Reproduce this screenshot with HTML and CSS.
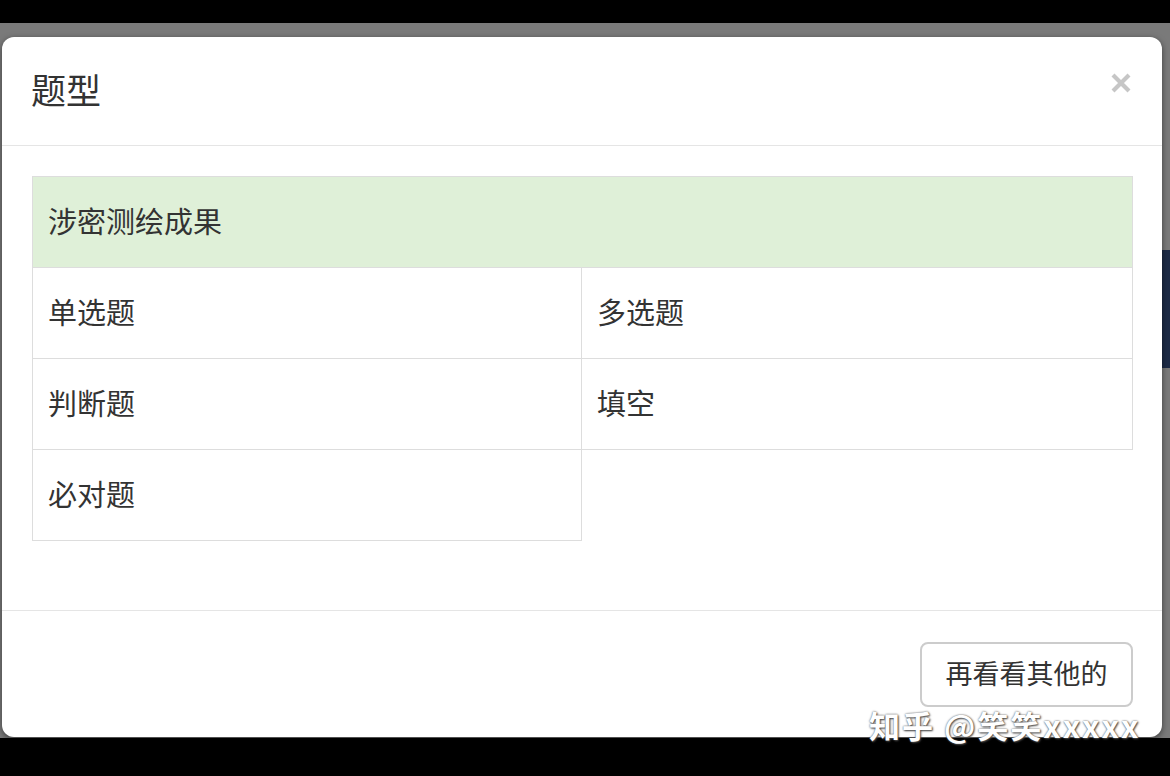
FILE: index.html
```html
<!DOCTYPE html>
<html lang="zh-CN">
<head>
    <meta charset="UTF-8">
    <meta name="viewport" content="width=device-width, initial-scale=1.0">
    <title>题型</title>
    <link rel="stylesheet" href="styles.css">
</head>
<body>
    <div class="screen">
        <div class="page-behind"></div>
        <div class="modal">
            <div class="modal-header">
                <h4 class="modal-title">题型</h4>
                <button class="close" type="button" aria-label="Close">
                    <svg width="22" height="22" viewBox="0 0 22 22">
                        <path d="M3 3 L19 19 M19 3 L3 19" stroke="#c6c6c6" stroke-width="4.2" stroke-linecap="butt"/>
                    </svg>
                </button>
            </div>
            <div class="modal-body">
                <table class="type-table">
                    <colgroup>
                        <col class="col-left">
                        <col>
                    </colgroup>
                    <tr class="success">
                        <td colspan="2">涉密测绘成果</td>
                    </tr>
                    <tr>
                        <td>单选题</td>
                        <td>多选题</td>
                    </tr>
                    <tr>
                        <td>判断题</td>
                        <td>填空</td>
                    </tr>
                    <tr>
                        <td>必对题</td>
                    </tr>
                </table>
            </div>
            <div class="modal-footer">
                <button class="btn" type="button">再看看其他的</button>
            </div>
        </div>
    </div>
    <div class="watermark">知乎 @笑笑xxxxx</div>
</body>
</html>
```

FILE: styles.css
```css
html, body {
    margin: 0;
    padding: 0;
}
body {
    background: #000;
    font-family: "Noto Sans CJK SC", "Liberation Sans", sans-serif;
    color: #333;
    width: 1170px;
    height: 776px;
    overflow: hidden;
    position: relative;
}
.screen {
    position: relative;
    margin-top: 23px;
    height: 715px;
    background: #7a7a7a;
    padding: 14px 0 0 2px;
    box-sizing: border-box;
}
.page-behind {
    position: absolute;
    right: 0;
    top: 227px;
    width: 8px;
    height: 118px;
    background: #1c2a46;
}
.modal {
    position: relative;
    width: 1160px;
    height: 700px;
    background: #fff;
    border-radius: 12px;
    box-shadow: 0 2px 6px rgba(0, 0, 0, 0.5);
    display: flex;
    flex-direction: column;
}
.modal-header {
    height: 108px;
    border-bottom: 1px solid #e5e5e5;
    display: flex;
    align-items: center;
    justify-content: space-between;
    padding: 0 30px 0 29px;
}
.modal-title {
    margin: -6px 0 0 0;
    font-size: 35px;
    font-weight: normal;
    color: #333;
    line-height: 1;
}
.close {
    background: none;
    border: none;
    padding: 0;
    margin-top: -16px;
    cursor: pointer;
    display: flex;
}
.modal-body {
    padding: 30px 29px 0 30px;
    height: 464px;
    box-sizing: border-box;
}
.type-table {
    width: 1101px;
    border-collapse: collapse;
    table-layout: fixed;
}
.col-left {
    width: 549px;
}
.type-table td {
    height: 85px;
    border: 1px solid #ddd;
    padding: 0 15px 5px 15px;
    font-size: 29px;
    vertical-align: middle;
    color: #333;
}
.type-table tr.success td {
    background: #dff0d8;
}
.modal-footer {
    flex: 1;
    border-top: 1px solid #e5e5e5;
    display: flex;
    justify-content: flex-end;
    align-items: center;
    padding: 0 29px 0 0;
}
.btn {
    width: 213px;
    height: 65px;
    background: #fff;
    border: 2px solid #ccc;
    border-radius: 8px;
    font-family: "Noto Sans CJK SC", "Liberation Sans", sans-serif;
    font-size: 27px;
    color: #333;
    cursor: pointer;
    padding-bottom: 4px;
}
.watermark {
    position: absolute;
    left: 869px;
    top: 702px;
    font-size: 31px;
    font-weight: bold;
    color: #fff;
    letter-spacing: 2px;
    white-space: nowrap;
    text-shadow: 0 0 2px #555, 1px 1px 2px #444;
}
```
